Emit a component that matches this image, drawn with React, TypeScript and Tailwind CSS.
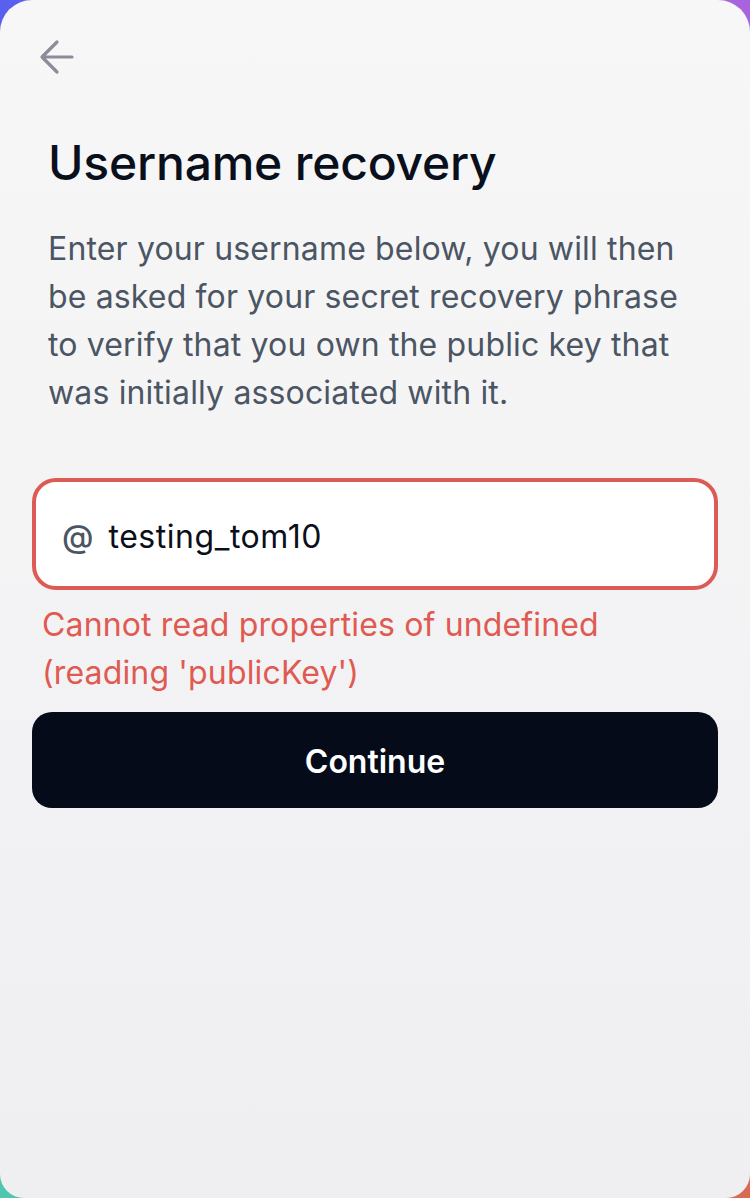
import React from "react";

export default function App() {
  return (
    <div
      className="w-[750px] h-[1198px] bg-[conic-gradient(from_0deg_at_50%_50%,#8a60e8_0deg,#a864de_32deg,#d96a50_148deg,#4ec6b0_212deg,#5a5ff0_328deg,#8a60e8_360deg)]"
      style={{ fontFamily: "Inter, 'Noto Sans', sans-serif" }}
    >
      <div className="w-full h-full rounded-t-[32px] rounded-b-[24px] bg-linear-to-b from-[#f7f7f7] to-[#efeff2] flex flex-col">
        <div className="pt-[37px] pl-[36px]">
          <svg width="40" height="40" viewBox="0 0 40 40" fill="none">
            <path
              d="M36 20H6 M21 5 6 20l15 15"
              stroke="#8c8d99"
              strokeWidth="3.2"
              strokeLinecap="round"
              strokeLinejoin="round"
            />
          </svg>
        </div>
        <h1 className="mt-[57px] px-[48px] text-[48px] leading-[58px] font-medium text-[#0a0f1c] tracking-[-0.2px]">
          Username recovery
        </h1>
        <p className="mt-[33px] px-[48px] text-[32px] leading-[48px] text-[#4b5563] tracking-[0.15px]">
          Enter your username below, you will then be asked for your secret recovery phrase to verify that you own the public key that was initially associated with it.
        </p>
        <div className="mx-[32px] mt-[61px] h-[112px] rounded-[24px] border-[4px] border-[#dc5b55] bg-white flex items-center pl-[26px] pt-[5px]">
          <span className="text-[32px] leading-[48px] font-medium text-[#4b5563]">@</span>
          <span className="ml-[15px] text-[32px] leading-[48px] text-[#0b0f1a] tracking-[0.55px]">testing_tom10</span>
        </div>
        <p className="mt-[11px] ml-[42px] mr-[32px] text-[32px] leading-[48px] text-[#e05a52] tracking-[0.15px]">
          Cannot read properties of undefined (reading 'publicKey')
        </p>
        <button className="mx-[32px] mt-[15px] h-[96px] rounded-[20px] bg-[#050b18] text-white text-[32px] font-semibold pt-[4px]">
          Continue
        </button>
      </div>
    </div>
  );
}
